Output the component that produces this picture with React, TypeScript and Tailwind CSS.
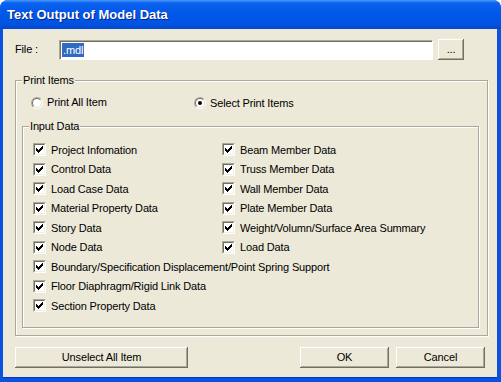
import React from "react";

const FONT = { fontFamily: '"Liberation Sans", Arial, sans-serif' };

function Check() {
  return (
    <span className="inline-flex w-[13px] h-[13px] shrink-0 border border-t-[#aca899] border-l-[#aca899] border-b-white border-r-white">
      <span className="flex flex-1 items-center justify-center bg-white border border-t-[#716f64] border-l-[#716f64] border-b-[#f1efe2] border-r-[#f1efe2]">
        <svg width="7" height="7" viewBox="0 0 7 7" shapeRendering="crispEdges">
          <path
            d="M0 2h1v3H0z M1 3h1v3H1z M2 4h1v3H2z M3 3h1v3H3z M4 2h1v3H4z M5 1h1v3H5z M6 0h1v3H6z"
            fill="#000"
          />
        </svg>
      </span>
    </span>
  );
}

function Radio({ on }: { on?: boolean }) {
  return (
    <span className="inline-flex w-[12px] h-[12px] shrink-0 rounded-full border border-t-[#aca899] border-l-[#aca899] border-b-white border-r-white">
      <span className="flex flex-1 items-center justify-center rounded-full bg-white border border-t-[#716f64] border-l-[#716f64] border-b-[#e4e1d3] border-r-[#e4e1d3]">
        {on && <span className="w-[4px] h-[4px] rounded-full bg-black" />}
      </span>
    </span>
  );
}

function Btn({ w, children }: { w: string; children?: React.ReactNode }) {
  return (
    <button
      className={`${w} h-[21px] flex items-center justify-center bg-[#ece9d8] text-[11px] text-black shadow-[inset_-1px_-1px_#716f64,inset_1px_1px_#ffffff,inset_-2px_-2px_#aca899]`}
    >
      {children}
    </button>
  );
}

function Item({ label }: { label: string }) {
  return (
    <div className="flex items-center h-[19.5px] gap-[5px]">
      <Check />
      <span className="whitespace-nowrap">{label}</span>
    </div>
  );
}

// etched group box, caption sits on the top line
function Group({
  title,
  className,
  children,
}: {
  title: string;
  className: string;
  children?: React.ReactNode;
}) {
  return (
    <div
      className={`${className} border border-[#aca899] shadow-[inset_1px_1px_#ffffff,1px_1px_#ffffff]`}
    >
      <div className="w-fit -mt-[7px] ml-[6px] px-[1px] leading-[13px] bg-[#ece9d8]">{title}</div>
      {children}
    </div>
  );
}

const left = [
  "Project Infomation",
  "Control Data",
  "Load Case Data",
  "Material Property Data",
  "Story Data",
  "Node Data",
];
const right = [
  "Beam Member Data",
  "Truss Member Data",
  "Wall Member Data",
  "Plate Member Data",
  "Weight/Volumn/Surface Area Summary",
  "Load Data",
];
const wide = [
  "Boundary/Specification Displacement/Point Spring Support",
  "Floor Diaphragm/Rigid Link Data",
  "Section Property Data",
];

export default function App() {
  return (
    <div
      className="w-[501px] h-[382px] flex flex-col bg-[#0a52e0] rounded-t-[8px] overflow-hidden text-[11px] tracking-[-0.15px] text-black"
      style={FONT}
    >
      {/* title bar */}
      <div className="h-[29px] shrink-0 flex items-center pl-[7px] pt-[1px] bg-[linear-gradient(180deg,#4a9bff_0%,#0c62ee_10%,#0058ea_45%,#0054e3_80%,#0647cf_100%)]">
        <span className="text-white font-bold text-[13px] tracking-normal [text-shadow:1px_1px_#0a2283]">
          Text Output of Model Data
        </span>
      </div>

      <div className="flex-1 ml-[3px] mr-[4px] mb-[4px] bg-[#ece9d8] flex flex-col px-[12px] pt-[10px] border-b border-[#0637b8]">
        {/* file row */}
        <div className="flex items-center h-[21px]">
          <span className="w-[44px]">File :</span>
          <div className="w-[374px] h-[20px] flex items-center px-[1px] bg-white border border-t-[#aca899] border-l-[#aca899] border-b-white border-r-white shadow-[inset_1px_1px_#716f64]">
            <span className="ml-[1px] px-[1px] leading-[14px] bg-[#316ac5] text-white">.mdl</span>
          </div>
          <div className="ml-[5px]">
            <Btn w="w-[26px]">...</Btn>
          </div>
        </div>

        <Group title="Print Items" className="mt-[20px] w-[473px]">
          <div className="flex items-center h-[13px] mt-[9px] pl-[15px]">
            <div className="flex items-center gap-[4px] w-[163px]">
              <Radio />
              <span>Print All Item</span>
            </div>
            <div className="flex items-center gap-[4px] mt-[1px]">
              <Radio on />
              <span>Select Print Items</span>
            </div>
          </div>

          <Group title="Input Data" className="mt-[17px] ml-[6px] mr-[8px] mb-[7px]">
            <div className="flex flex-col pl-[10px] pt-[7px] pb-[11px]">
              <div className="flex">
                <div className="w-[189px] flex flex-col">
                  {left.map((t) => (
                    <Item key={t} label={t} />
                  ))}
                </div>
                <div className="flex flex-col">
                  {right.map((t) => (
                    <Item key={t} label={t} />
                  ))}
                </div>
              </div>
              {wide.map((t) => (
                <Item key={t} label={t} />
              ))}
            </div>
          </Group>
        </Group>

        {/* buttons */}
        <div className="flex mt-[11px] gap-[7px]">
          <Btn w="w-[173px]">Unselect All Item</Btn>
          <div className="flex-1" />
          <Btn w="w-[89px]">OK</Btn>
          <Btn w="w-[89px]">Cancel</Btn>
        </div>
      </div>
    </div>
  );
}
